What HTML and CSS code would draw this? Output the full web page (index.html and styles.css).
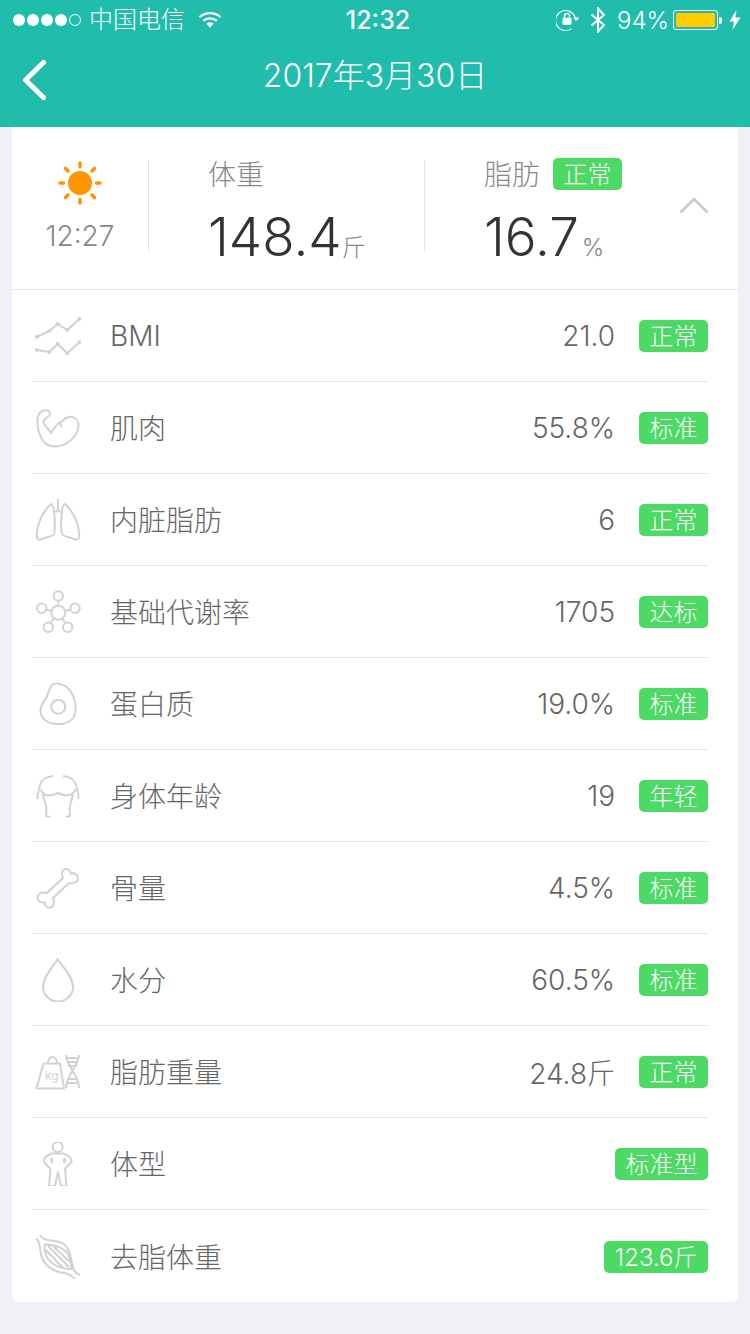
FILE: index.html
```html
<!DOCTYPE html>
<html lang="zh">
<head>
<meta charset="utf-8">
<title>2017年3月30日</title>
<link rel="stylesheet" href="styles.css">
</head>
<body>
<header class="header">
  <div class="status">
    <div class="status-left">
      <span class="signal"><i></i><i></i><i></i><i></i><i class="off"></i></span>
      <span class="carrier">中国电信</span>
      <svg class="wifi" width="24" height="18" viewBox="0 0 24 18"><path d="M1.5 6.2C7.5 .8 16.5 .8 22.5 6.2" fill="none" stroke="#fff" stroke-width="2.4"/><path d="M5.3 9.8C9.2 6.6 14.8 6.6 18.7 9.8" fill="none" stroke="#fff" stroke-width="2.4"/><path d="M8.3 12.6L12 16.8L15.7 12.6C13.5 10.9 10.5 10.9 8.3 12.6Z" fill="#fff"/></svg>
    </div>
    <div class="clock">12:32</div>
    <div class="status-right">
      <svg class="lock" width="24" height="24" viewBox="0 0 24 24"><path d="M19.6 12.5A10 10 0 1 0 15.5 20.6" fill="none" stroke="#fff" stroke-width="1.1"/><path d="M17.2 9.5H23.5L20.3 13Z" fill="#fff"/><rect x="6.5" y="9.8" width="9" height="7" rx="1" fill="#fff"/><path d="M8.5 10V8a2.5 2.5 0 0 1 5 0v2" fill="none" stroke="#fff" stroke-width="1.3"/></svg>
      <svg class="bt" width="16" height="26" viewBox="0 0 16 26"><path d="M1.500 7.500L14 18L8 24.500V1.500L14 8L1.500 18.500" fill="none" stroke="#fff" stroke-width="2"/></svg>
      <span class="pct">94%</span>
      <span class="battery"><span class="battery-fill"></span></span>
      <span class="battery-tip"></span>
      <svg class="bolt" width="12" height="20" viewBox="0 0 12 20"><path d="M7.5 0L.5 11.5H5L3.5 20L11.5 7.5H6.5Z" fill="#fff"/></svg>
    </div>
  </div>
  <div class="nav">
    <svg class="back" width="26" height="42" viewBox="0 0 26 42"><path d="M22.5 3.5L4.5 21L22.5 38.5" fill="none" stroke="#fff" stroke-width="5" stroke-linecap="round" stroke-linejoin="round"/></svg>
    <h1 class="title">2017年3月30日</h1>
  </div>
</header>

<main class="card">
  <section class="summary">
    <div class="sum-time">
      <svg class="sun" width="46" height="46" viewBox="0 0 46 46"><circle cx="23" cy="23" r="12" fill="#ff9500"/><g stroke="#ff9500" stroke-width="3.6" stroke-linecap="round"><path d="M23 3V6.500M23 39.500V43M3 23H6.500M39.500 23H43M8.500 8.500L11 11M35 35L37.500 37.500M37.500 8.500L35 11M11 35L8.500 37.500"/></g></svg>
      <span class="time-text">12:27</span>
    </div>
    <div class="sum-col sum-weight">
      <div class="sum-label"><span>体重</span></div>
      <div class="sum-value"><b>148.4</b><small>斤</small></div>
    </div>
    <div class="sum-col sum-fat">
      <div class="sum-label"><span>脂肪</span><em class="tag">正常</em></div>
      <div class="sum-value"><b>16.7</b><small class="unit-pct">%</small></div>
    </div>
    <svg class="chevron" width="30" height="18" viewBox="0 0 30 18"><path d="M1.500 16.500L15 3L28.500 16.500" fill="none" stroke="#c8c8c8" stroke-width="2.500"/></svg>
  </section>

  <ul class="list">
    <li class="row">
      <svg class="ico" width="50" height="44" viewBox="0 0 50 44"><path fill="none" d="M3.700 23L16.300 17L24.700 10L34.300 16L46.300 5M3.700 36L16.300 38L24.700 30L34.300 39.300L46.300 28.300"/><g class="dots"><circle cx="3.700" cy="23" r="2"/><circle cx="16.300" cy="17" r="2"/><circle cx="24.700" cy="10" r="2"/><circle cx="34.300" cy="16" r="2"/><circle cx="46.300" cy="5" r="2"/><circle cx="3.700" cy="36" r="2"/><circle cx="16.300" cy="38" r="2"/><circle cx="24.700" cy="30" r="2"/><circle cx="34.300" cy="39.300" r="2"/><circle cx="46.300" cy="28.300" r="2"/></g></svg>
      <span class="name name-latin">BMI</span><span class="val">21.0</span><em class="tag">正常</em>
    </li>
    <li class="row">
      <svg class="ico" width="50" height="44" viewBox="0 0 50 44"><path fill="none" d="M18 27C15 22 10 19 10.500 15.500C11 12 17 11 17 8C17 5 14 4 11 4.500C6 5.500 4 11 4.300 16C4.500 24 8 36 15 39C22 42 30 40 34 37C40 33 45 27 45.500 20C46 14 41 10 36 11C31 12 29 16 25 18C22 20 20 24 18 27ZM27 17L29 21"/></svg>
      <span class="name">肌肉</span><span class="val">55.8%</span><em class="tag">标准</em>
    </li>
    <li class="row">
      <svg class="ico" width="50" height="44" viewBox="0 0 50 44"><path fill="none" d="M25 1V12M25 12L21 15M25 12L29 15M18 6C11 12 4 25 3.700 37C3.500 42 6 42.500 9 41C13 39 19 39 21 36C22 32 22 22 21 14C20.500 9 20 6 18 6ZM32 6C39 12 46 25 46.300 37C46.500 42 44 42.500 41 41C37 39 31 39 29 36C28 32 28 22 29 14C29.500 9 30 6 32 6Z"/></svg>
      <span class="name">内脏脂肪</span><span class="val">6</span><em class="tag">正常</em>
    </li>
    <li class="row">
      <svg class="ico" width="50" height="44" viewBox="0 0 50 44"><g fill="none"><circle cx="25.300" cy="22.700" r="7"/><circle cx="25.300" cy="6" r="4.700"/><circle cx="8.700" cy="18.300" r="4.700"/><circle cx="42" cy="18.300" r="4.700"/><circle cx="15.300" cy="37.300" r="4.700"/><circle cx="34.700" cy="37.300" r="4.700"/><path d="M25.300 10.700V15.700M13.300 19.500L18.500 21M37.400 19.500L32 21M17.500 33L21 28.500M32.500 33L29 28.500"/></g></svg>
      <span class="name">基础代谢率</span><span class="val">1705</span><em class="tag">达标</em>
    </li>
    <li class="row">
      <svg class="ico" width="50" height="44" viewBox="0 0 50 44"><g fill="none"><path d="M23 1.500C30 1 37 6 40 14C43 21 44 30 40 36C36 41 30 42.500 24 42C15 42 8 37 7.500 29C7 23 11 20 13.500 15C16 9 17 2 23 1.500Z"/><circle cx="25.300" cy="24.700" r="7"/></g></svg>
      <span class="name">蛋白质</span><span class="val">19.0%</span><em class="tag">标准</em>
    </li>
    <li class="row">
      <svg class="ico" width="50" height="44" viewBox="0 0 50 44"><path fill="none" d="M20 2C13 3 8 6 7 11C6 16 4 20 4.500 25M30 2C37 3 42 6 43 11C44 16 46 20 45.500 25M8 15C8 18 11 20 13 21C17 22 21 21 25 19C29 21 33 22 37 21C39 20 42 18 42 15M10 19C10 24 12 28 13 31C14 35 13 38 13 42L17 43M40 19C40 24 38 28 37 31C36 35 37 38 37 42L33 43"/></svg>
      <span class="name">身体年龄</span><span class="val">19</span><em class="tag">年轻</em>
    </li>
    <li class="row">
      <svg class="ico" width="50" height="44" viewBox="0 0 50 44"><path fill="none" d="M14 27L30 12C28 8 29 3 33 3C36 3 38 5 37.500 8C41 6 45 9 45 12.500C45 16 40 18 36 17L20 32C22 36 21 41 17 41.500C14 42 11.500 40 12 36.500C8 37 4.500 35 4.500 31.500C4.500 27.500 10 25.500 14 27Z"/></svg>
      <span class="name">骨量</span><span class="val">4.5%</span><em class="tag">标准</em>
    </li>
    <li class="row">
      <svg class="ico" width="50" height="44" viewBox="0 0 50 44"><path fill="none" d="M24.700 1C21 8 10 18 10 29C10 37 17 43.500 25 43.500C33 43.500 40 37 40 29C40 18 28.500 8 24.700 1Z"/></svg>
      <span class="name">水分</span><span class="val">60.5%</span><em class="tag">标准</em>
    </li>
    <li class="row">
      <svg class="ico" width="50" height="44" viewBox="0 0 50 44"><g fill="none"><path d="M10.500 13.500H27L31 38.500H3.500ZM15 13C15 5 24 5 24 13M33 5C33 16 46 24 46 38M46 5C46 16 33 24 33 38M34 8H45M34 12H45M35 16H44M35 29H44M34 33H45"/></g><text class="kg" x="12" y="30">kg</text></svg>
      <span class="name">脂肪重量</span><span class="val">24.8斤</span><em class="tag">正常</em>
    </li>
    <li class="row">
      <svg class="ico" width="50" height="44" viewBox="0 0 50 44"><g fill="none"><circle cx="24.700" cy="5" r="5"/><path d="M19 11.500H30.500C34 13 39 16 38.500 19C38 22 33 25 32 27L33.500 44H28L25 30L22 44H16L17.500 27C16 25 11.500 22 11 19C10.500 16 15 13 19 11.500Z"/></g><ellipse class="dots" cx="18.700" cy="18.500" rx="1.500" ry="3"/><ellipse class="dots" cx="31.500" cy="18.500" rx="1.500" ry="3"/></svg>
      <span class="name">体型</span><em class="tag tag-push">标准型</em>
    </li>
    <li class="row">
      <svg class="ico" width="50" height="44" viewBox="0 0 50 44"><g fill="none"><path d="M7 0C10 7 20 4 29 8C38 13 38 26 40 32C41 37 44 39 47 40M3 3.500C8 7 6 15 9 22C12 32 22 37 31 38C36 38.500 39 41 42 44"/><path d="M12 9.500C22 9 33 14 36 21C38 26 38 30 38.700 34.300C30 34 20 31 15 24C12 19 11 14 12 9.500ZM15 11L36 32M13 15L30 33M20 11L37 27"/></g></svg>
      <span class="name">去脂体重</span><em class="tag tag-push">123.6斤</em>
    </li>
  </ul>
</main>
</body>
</html>
```

FILE: styles.css
```css
* { box-sizing: border-box; }
html, body { margin: 0; padding: 0; }
body {
  width: 750px;
  height: 1334px;
  overflow: hidden;
  background: #f0f0f6;
  font-family: Inter, Roboto, "Noto Sans CJK SC", sans-serif;
  color: #666;
}
.header {
  height: 127px;
  background: #20bcac;
  color: #fff;
}
.status {
  height: 40px;
  padding: 0 9px 0 13px;
  display: flex;
  align-items: center;
  position: relative;
}
.status-left, .status-right { display: flex; align-items: center; }
.status-left { flex: 1; }
.status-right { flex: 1; justify-content: flex-end; }
.signal { display: flex; gap: 2px; margin-right: 8px; }
.signal i {
  width: 12px;
  height: 12px;
  border-radius: 50%;
  background: #fff;
}
.signal i.off { background: none; border: 1px solid #fff; }
.carrier { font-size: 24px; font-weight: 300; margin-right: 13px; line-height: 40px; height: 40px; }
.clock { font-size: 25px; font-weight: 500; width: 70px; text-align: center; padding-left: 2px; }
.lock { margin-right: 10px; }
.bt { margin-right: 11px; }
.pct { font-size: 24px; font-weight: 300; margin-right: 4px; }
.battery {
  width: 45px;
  height: 20px;
  border: 1px solid #fff;
  border-radius: 3px;
  padding: 2px;
  display: flex;
}
.battery-fill { flex: 1; background: #ffcc00; border-radius: 1px; }
.battery-tip { width: 3px; height: 7px; background: #fff; margin: 0 7px 0 1px; border-radius: 0 2px 2px 0; }
.nav {
  height: 72px;
  display: flex;
  align-items: center;
  position: relative;
}
.back { position: absolute; left: 21px; top: 19px; }
.title {
  margin: 0;
  width: 100%;
  text-align: center;
  font-size: 32px;
  font-weight: 300;
  line-height: 40px;
}
.card {
  margin: 0 12px;
  width: 726px;
  height: 1175px;
  background: #fff;
  border-radius: 0 0 6px 6px;
}
.summary {
  height: 163px;
  border-bottom: 1px solid #e4e4e6;
  display: flex;
  padding-top: 33px;
  position: relative;
}
.sum-time {
  width: 137px;
  height: 92px;
  border-right: 1px solid #e4e4e6;
  display: flex;
  flex-direction: column;
  align-items: center;
}
.sun { display: block; flex: none; margin-bottom: 6px; }
.time-text { flex: none; font-size: 28px; font-weight: 300; color: #888; line-height: 40px; margin-top: 4px; }
.sum-col { height: 92px; }
.sum-weight { width: 276px; padding-left: 59px; border-right: 1px solid #e4e4e6; }
.sum-fat { padding-left: 59px; }
.sum-label {
  display: flex;
  align-items: center;
  height: 30px;
  font-size: 28px;
  font-weight: 300;
  color: #888;
  margin-top: -2px;
}
.sum-value {
  margin-top: 15px;
  display: flex;
  align-items: baseline;
  line-height: 68px;
}
.sum-value b { font-size: 53px; font-weight: 300; color: #333; }
.sum-value small { font-size: 24px; font-weight: 300; color: #888; margin-left: 0; }
.sum-value .unit-pct { margin-left: 3px; }
.sum-label .tag { margin-left: 13px; margin-top: 2px; }
.chevron { position: absolute; right: 29px; top: 69px; }
.tag {
  display: block;
  height: 32px;
  line-height: 34px;
  padding: 0 10.5px;
  background: #4cd964;
  color: #fff;
  border-radius: 5px;
  font-style: normal;
  font-size: 24px;
  font-weight: 300;
  white-space: nowrap;
}
.list { list-style: none; margin: 0 30px 0 21px; padding: 0; }
.row {
  height: 92px;
  display: flex;
  align-items: center;
  border-bottom: 1px solid #e4e4e6;
  padding-top: 1px;
}
.row:last-child { border-bottom: 0; }
.ico {
  width: 50px;
  height: 44px;
  margin-right: 27px;
  flex: none;
  stroke: #d2d2d2;
  stroke-width: 2;
  stroke-linejoin: round;
}
.dots { fill: #d2d2d2; stroke: none; }
.kg { font-size: 12px; fill: #d2d2d2; stroke: none; font-family: Inter, sans-serif; }
.name { flex: 1; font-size: 28px; font-weight: 300; color: #666; padding-bottom: 2px; }
.name-latin { padding-bottom: 0; }
.val { font-size: 28px; font-weight: 300; color: #666; margin-right: 24px; }
.tag-push { margin-left: auto; }
```
